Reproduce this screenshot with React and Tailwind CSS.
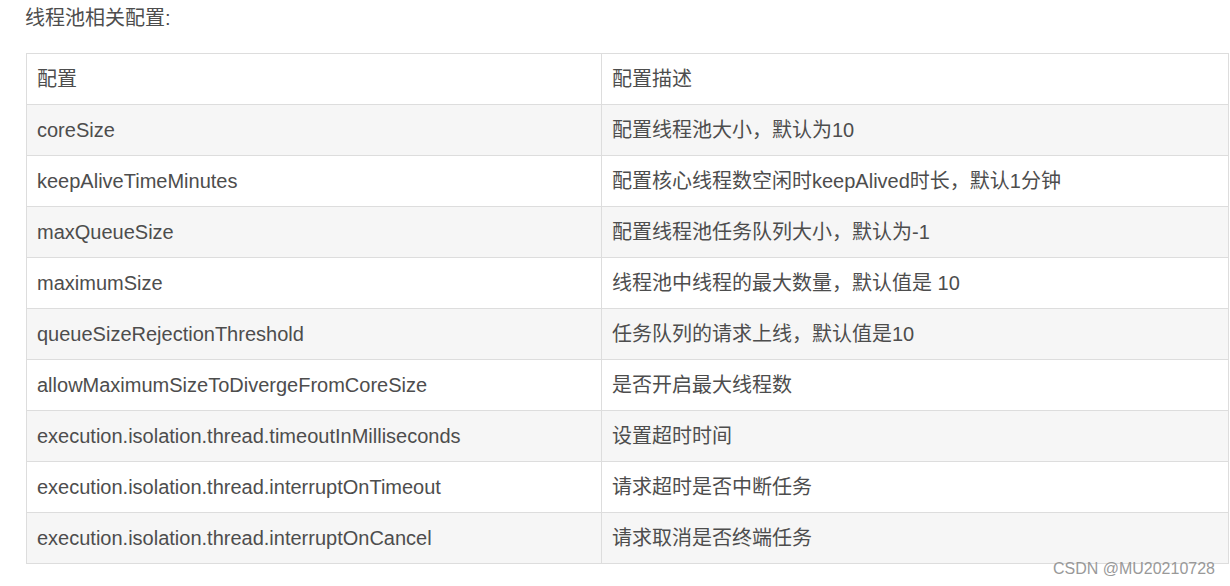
const rows=[["coreSize","配置线程池大小，默认为10"],["keepAliveTimeMinutes","配置核心线程数空闲时keepAlived时长，默认1分钟"],["maxQueueSize","配置线程池任务队列大小，默认为-1"],["maximumSize","线程池中线程的最大数量，默认值是 10"],["queueSizeRejectionThreshold","任务队列的请求上线，默认值是10"],["allowMaximumSizeToDivergeFromCoreSize","是否开启最大线程数"],["execution.isolation.thread.timeoutInMilliseconds","设置超时时间"],["execution.isolation.thread.interruptOnTimeout","请求超时是否中断任务"],["execution.isolation.thread.interruptOnCancel","请求取消是否终端任务"]];
export default function App(){
return <div className="relative w-[1230px] h-[586px] bg-white text-[#4d4d4d] overflow-hidden" style={{fontFamily:'"Liberation Sans","Noto Sans CJK SC",sans-serif'}}>
<div className="pl-[25px] pt-[5px] h-[53px] text-[20px] leading-[26px]">线程池相关配置:</div>
<table className="ml-[26px] w-[1203px] border-collapse text-[20px] table-fixed">
<tbody>
<tr className="h-[51px] bg-white"><td className="w-[575px] border border-[#dddddd] px-[10px]">配置</td><td className="border border-[#dddddd] px-[10px]">配置描述</td></tr>
{rows.map((r,i)=><tr key={i} className={"h-[51px] "+(i%2===0?"bg-[#f6f6f6]":"bg-white")}><td className="border border-[#dddddd] px-[10px]">{r[0]}</td><td className="border border-[#dddddd] px-[10px]">{r[1]}</td></tr>)}
</tbody></table>
<div className="absolute right-[15px] top-[558px] text-[16px] text-[#999] leading-[22px]">CSDN @MU20210728</div>
</div>}
